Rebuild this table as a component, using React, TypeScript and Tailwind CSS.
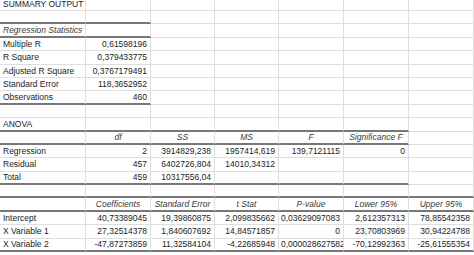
const W = ['w-[86px]', 'w-[65px]', 'w-[64px]', 'w-[64px]', 'w-[65px]', 'w-[65px]', 'w-[65px]'];

type Kind = 'text' | 'sub' | 'head' | 'data';
interface Row { cells: string[]; kind: Kind; dark?: number; }

const rows: Row[] = [
  { kind: 'text', cells: ['SUMMARY OUTPUT'] },
  { kind: 'text', cells: [], dark: 2 },
  { kind: 'sub', cells: ['Regression Statistics'], dark: 2 },
  { kind: 'data', cells: ['Multiple R', '0,61598196'] },
  { kind: 'data', cells: ['R Square', '0,379433775'] },
  { kind: 'data', cells: ['Adjusted R Square', '0,3767179491'] },
  { kind: 'data', cells: ['Standard Error', '118,3652952'] },
  { kind: 'data', cells: ['Observations', '460'], dark: 2 },
  { kind: 'text', cells: [] },
  { kind: 'text', cells: ['ANOVA'], dark: 6 },
  { kind: 'head', cells: ['', 'df', 'SS', 'MS', 'F', 'Significance F'], dark: 6 },
  { kind: 'data', cells: ['Regression', '2', '3914829,238', '1957414,619', '139,7121115', '0'] },
  { kind: 'data', cells: ['Residual', '457', '6402726,804', '14010,34312'] },
  { kind: 'data', cells: ['Total', '459', '10317556,04'], dark: 6 },
  { kind: 'text', cells: [], dark: 7 },
  { kind: 'head', cells: ['', 'Coefficients', 'Standard Error', 't Stat', 'P-value', 'Lower 95%', 'Upper 95%'], dark: 7 },
  { kind: 'data', cells: ['Intercept', '40,73389045', '19,39860875', '2,099835662', '0,03629097083', '2,612357313', '78,85542358'] },
  { kind: 'data', cells: ['X Variable 1', '27,32514378', '1,840607692', '14,84571857', '0', '23,70803969', '30,94224788'] },
  { kind: 'data', cells: ['X Variable 2', '-47,87273859', '11,32584104', '-4,22685948', '0,000028627582', '-70,12992363', '-25,61555354'], dark: 7 },
];

function Cell({ row, i }: { row: Row; i: number }) {
  const t = row.cells[i] ?? '';
  const dark = row.dark !== undefined && i < row.dark;
  const overflow = t.length > 13;
  let align = 'justify-start pl-[3px]';
  if (row.kind === 'head') align = 'justify-center';
  else if (row.kind === 'data' && i > 0) align = overflow ? 'justify-start pl-[2px]' : 'justify-end pr-[3px]';
  const italic = row.kind === 'head' || row.kind === 'sub';
  return (
    <div
      className={`${W[i]} shrink-0 h-full flex items-center overflow-hidden whitespace-nowrap border-r border-r-[#dedede] ${
        dark ? 'border-b-2 border-b-[#777]' : 'border-b border-b-[#dedede]'
      } ${align} ${italic ? 'italic text-[#3a3a3a]' : ''}`}
    >
      {t}
    </div>
  );
}

export default function App() {
  return (
    <div className="w-[474px] h-[255px] overflow-hidden bg-white font-['Liberation_Sans',Arial,sans-serif] text-[8.5px] leading-none text-[#1c1c1c]">
      <div className="mt-[-2.4px] flex flex-col">
        {rows.map((r, ri) => (
          <div key={ri} className="flex h-[13.4px]">
            {W.map((_, i) => <Cell key={i} row={r} i={i} />)}
          </div>
        ))}
      </div>
    </div>
  );
}
